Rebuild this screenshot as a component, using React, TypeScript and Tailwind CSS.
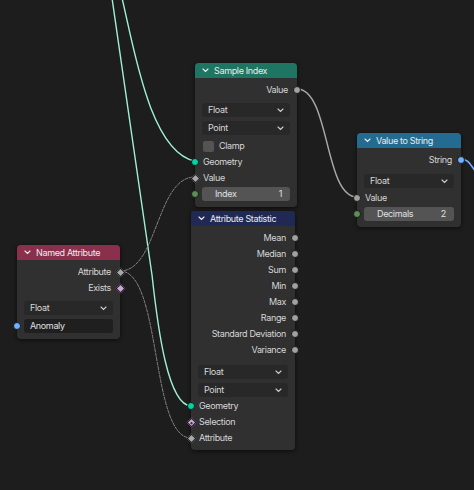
import React from 'react';

// Blender-style node editor: nodes sit on a free canvas, wires drawn as svg
type SocketKind = 'geo' | 'float' | 'int' | 'string' | 'fieldGray' | 'fieldPink' | 'fieldPinkDot';

const FONT = { fontFamily: 'Inter, "DejaVu Sans", sans-serif' };

function Socket({ kind, side }: { kind: SocketKind; side: 'left' | 'right' }) {
  const pos = side === 'left' ? 'left-[-4px]' : 'right-[-4px]';
  if (kind === 'fieldGray' || kind === 'fieldPink' || kind === 'fieldPinkDot') {
    const color = kind === 'fieldGray' ? 'bg-[#a8a8a8]' : 'bg-[#cfa6da]';
    return (
      <span
        className={`absolute ${pos} top-1/2 -translate-y-1/2 w-[8px] h-[8px] flex items-center justify-center`}
      >
        <span className={`w-[7px] h-[7px] rotate-45 ${color} border border-[#1a1a1a] flex items-center justify-center`}>
          {kind === 'fieldPinkDot' && <span className="w-[2px] h-[2px] bg-[#3a2a3e]" />}
        </span>
      </span>
    );
  }
  const colors: Record<string, string> = {
    geo: 'bg-[#00d6a3]',
    float: 'bg-[#a1a1a1]',
    int: 'bg-[#5b8f57]',
    string: 'bg-[#70b2ff]',
  };
  return (
    <span
      className={`absolute ${pos} top-1/2 -translate-y-1/2 w-[8px] h-[8px] rounded-full border border-[#1a1a1a] ${colors[kind]}`}
    />
  );
}

function OutRow({ label, kind }: { label: string; kind: SocketKind }) {
  return (
    <div className="relative h-[16px] flex items-center justify-end pr-[9px] text-[#d6d6d6]">
      {label}
      <Socket kind={kind} side="right" />
    </div>
  );
}

function InRow({ label, kind }: { label: string; kind: SocketKind }) {
  return (
    <div className="relative h-[16px] flex items-center pl-[8px] text-[#d6d6d6]">
      {label}
      <Socket kind={kind} side="left" />
    </div>
  );
}

function Chevron({ className = '' }: { className?: string }) {
  return (
    <svg width="7" height="5" viewBox="0 0 7 5" className={className}>
      <path d="M1 1 L3.5 3.5 L6 1" fill="none" stroke="currentColor" strokeWidth="1.1" strokeLinecap="round" />
    </svg>
  );
}

function Dropdown({ label, mt }: { label: string; mt: string }) {
  return (
    <div
      className={`${mt} mx-[7px] h-[14px] rounded-[3px] bg-[#282828] flex items-center justify-between px-[6px] text-[#d8d8d8]`}
    >
      {label}
      <Chevron className="text-[#cfcfcf]" />
    </div>
  );
}

function Field({ label, value, mt, kind, center }: { label: string; value?: string; mt: string; kind: SocketKind; center?: boolean }) {
  return (
    <div className={`relative ${mt} h-[14px] flex items-center`}>
      <Socket kind={kind} side="left" />
      <div
        className={`mx-[7px] w-full h-[14px] rounded-[3px] flex items-center text-[#e0e0e0] ${
          center ? 'bg-[#545454] justify-between pl-[13px] pr-[8px]' : 'bg-[#1f1f1f] pl-[6px]'
        }`}
      >
        <span>{label}</span>
        {value && <span>{value}</span>}
      </div>
    </div>
  );
}

function Node({
  title,
  header,
  left,
  top,
  width,
  children,
  pb,
}: {
  title: string;
  header: string;
  left: string;
  top: string;
  width: string;
  pb: string;
  children: React.ReactNode;
}) {
  return (
    <div
      className={`absolute ${left} ${top} ${width} rounded-[4px] bg-[#303030] shadow-[0_1px_4px_rgba(0,0,0,0.6)] text-[9px] tracking-[-0.35px] ${pb}`}
    >
      <div className={`h-[15px] rounded-t-[4px] ${header} flex items-center pl-[7px] gap-[5px] text-[#ececec]`}>
        <Chevron className="text-[#f0f0f0]" />
        <span>{title}</span>
      </div>
      {children}
    </div>
  );
}

function Wires() {
  return (
    <svg className="absolute inset-0" width="474" height="490" viewBox="0 0 474 490">
      <g fill="none" strokeLinecap="round">
        {/* geometry wires coming from above */}
        <path d="M112 -2 L152 275 C158 330 168 405 191 406" stroke="#16211e" strokeWidth="3" />
        <path d="M112 -2 L152 275 C158 330 168 405 191 406" stroke="#a6ecd7" strokeWidth="1.4" />
        <path d="M122 -2 C134 48 150 152 195 161" stroke="#16211e" strokeWidth="3" />
        <path d="M122 -2 C134 48 150 152 195 161" stroke="#a6ecd7" strokeWidth="1.4" />
        {/* value -> value to string */}
        <path d="M297 89 C330 89 324 197 357 197" stroke="#a9a9a9" strokeWidth="1.4" />
        {/* field wires */}
        <path d="M120 271 C158 271 156 177 195 177" stroke="#858585" strokeWidth="1" strokeDasharray="3 1.5" />
        <path d="M120 271 C162 271 150 438 191 438" stroke="#858585" strokeWidth="1" strokeDasharray="3 1.5" />
        {/* string out */}
        <path d="M461 159 C468 159 470 164 476 172" stroke="#70b2ff" strokeWidth="1.6" />
      </g>
    </svg>
  );
}

export default function App() {
  return (
    <div className="relative w-[474px] h-[490px] overflow-hidden bg-[#1d1d1d]" style={FONT}>
      <Wires />

      <Node title="Sample Index" header="bg-[#1e7561]" left="left-[195px]" top="top-[63px]" width="w-[102px]" pb="pb-[6px]">
        <div className="pt-[4px]" />
        <OutRow label="Value" kind="float" />
        <Dropdown label="Float" mt="mt-[5px]" />
        <Dropdown label="Point" mt="mt-[4px]" />
        <div className="mt-[3px] h-[16px] flex items-center pl-[8px] gap-[5px] text-[#d6d6d6]">
          <span className="w-[11px] h-[11px] rounded-[2px] bg-[#545454]" />
          Clamp
        </div>
        <InRow label="Geometry" kind="geo" />
        <InRow label="Value" kind="fieldGray" />
        <Field label="Index" value="1" mt="mt-[1px]" kind="int" center />
      </Node>

      <Node title="Value to String" header="bg-[#246b92]" left="left-[357px]" top="top-[133px]" width="w-[104px]" pb="pb-[6px]">
        <div className="pt-[4px]" />
        <OutRow label="String" kind="string" />
        <Dropdown label="Float" mt="mt-[6px]" />
        <div className="mt-[2px]" />
        <InRow label="Value" kind="float" />
        <Field label="Decimals" value="2" mt="mt-[1px]" kind="int" center />
      </Node>

      <Node title="Named Attribute" header="bg-[#8a2f4c]" left="left-[17px]" top="top-[245px]" width="w-[103px]" pb="pb-[6px]">
        <div className="pt-[4px]" />
        <OutRow label="Attribute" kind="fieldGray" />
        <OutRow label="Exists" kind="fieldPink" />
        <Dropdown label="Float" mt="mt-[5px]" />
        <Field label="Anomaly" mt="mt-[4px]" kind="string" />
      </Node>

      <Node title="Attribute Statistic" header="bg-[#1f2953]" left="left-[191px]" top="top-[211px]" width="w-[104px]" pb="pb-[4px]">
        <div className="pt-[4px]" />
        <OutRow label="Mean" kind="float" />
        <OutRow label="Median" kind="float" />
        <OutRow label="Sum" kind="float" />
        <OutRow label="Min" kind="float" />
        <OutRow label="Max" kind="float" />
        <OutRow label="Range" kind="float" />
        <OutRow label="Standard Deviation" kind="float" />
        <OutRow label="Variance" kind="float" />
        <Dropdown label="Float" mt="mt-[7px]" />
        <Dropdown label="Point" mt="mt-[4px]" />
        <div className="mt-[1px]" />
        <InRow label="Geometry" kind="geo" />
        <InRow label="Selection" kind="fieldPinkDot" />
        <InRow label="Attribute" kind="fieldGray" />
      </Node>
    </div>
  );
}
